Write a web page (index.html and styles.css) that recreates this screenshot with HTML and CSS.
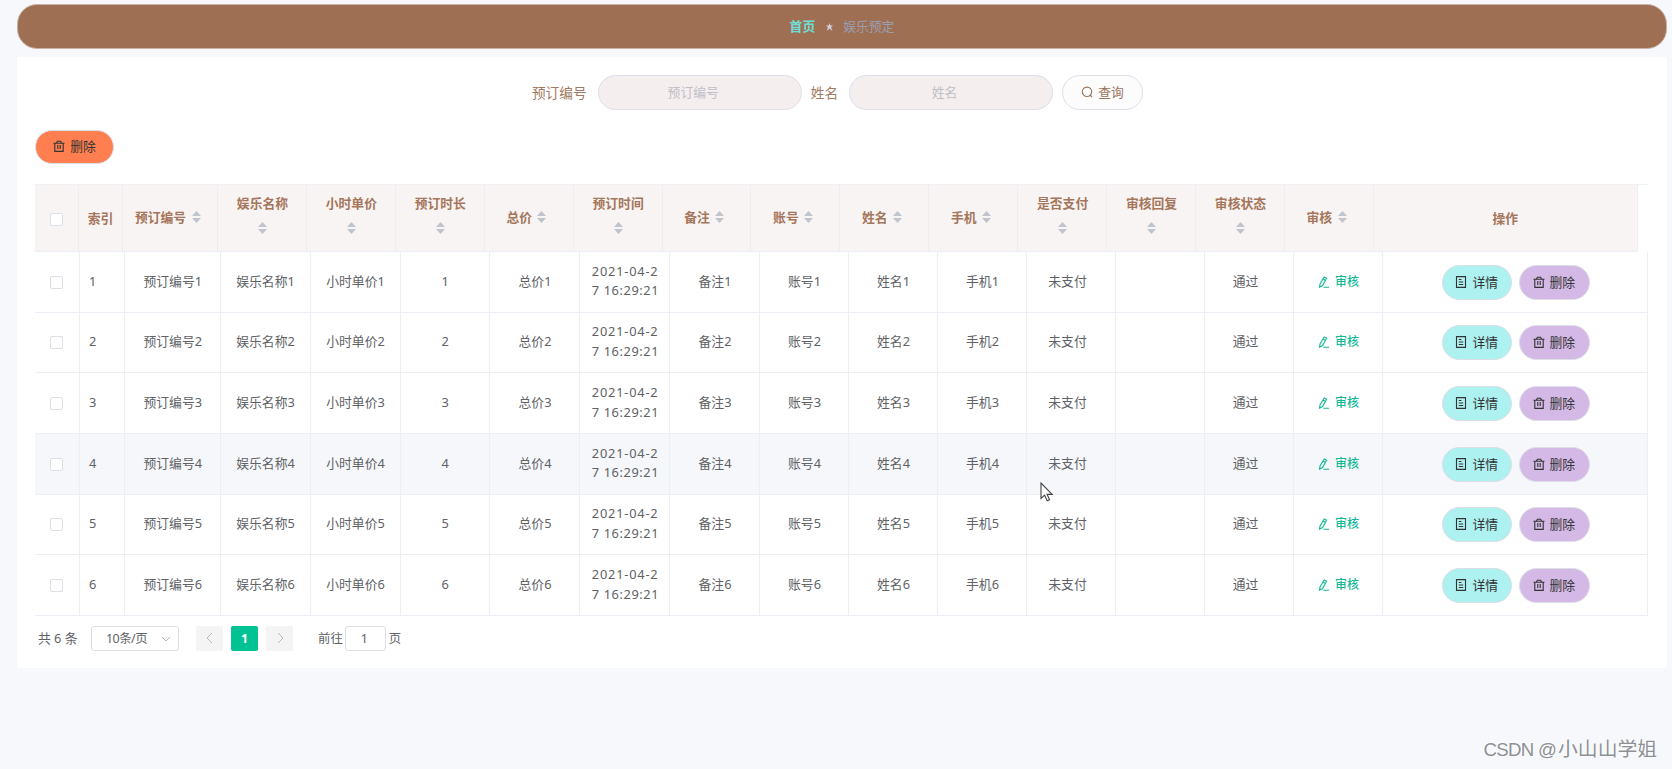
FILE: index.html
```html
<!DOCTYPE html>
<html lang="zh-CN">
<head>
<meta charset="utf-8">
<title>娱乐预定</title>
<link rel="stylesheet" href="styles.css">
</head>
<body>
<svg class="sprite" width="0" height="0">
  <symbol id="i-trash" viewBox="0 0 12 12"><path d="M.5 3.2h11M3.4 3l1-1.8h3.2l1 1.8M1.8 3v8.4h8.4V3M4.8 5v4M7.2 5v4"/></symbol>
  <symbol id="i-doc" viewBox="0 0 12 12"><path d="M1.5.6h9v10.8h-9zM3.8 3.5h2.6M3.8 6h4.4M3.8 8.5h4.4"/></symbol>
  <symbol id="i-edit" viewBox="0 0 12 12"><path d="M6.2.9l2.4 1.4-4 7.2-3 1.6.4-3.2zM5 3l2.4 1.5M5.4 11.2h5.6"/></symbol>
  <symbol id="i-search" viewBox="0 0 12 12"><circle cx="6" cy="5.8" r="4.7"/><path d="M9 9l2 2"/></symbol>
</svg>
<main class="page">
  <nav class="crumbs">
    <span class="crumb-home">首页</span><span class="crumb-sep"><svg viewBox="0 0 7 8"><path d="M3.5 0l.8 2.6H7L5 4.3 6.4 8 3.5 5.6.6 8 2 4.3 0 2.6h2.7z"/></svg></span><span class="crumb-here">娱乐预定</span>
  </nav>
  <section class="card">
    <form class="search">
      <label class="label">预订编号</label>
      <div class="field">预订编号</div>
      <label class="label label-name">姓名</label>
      <div class="field">姓名</div>
      <button type="button" class="btn btn-search"><svg class="icon"><use href="#i-search"/></svg>查询</button>
    </form>
    <div class="actions">
      <button type="button" class="btn btn-batch"><svg class="icon"><use href="#i-trash"/></svg>删除</button>
    </div>
    <div class="table">
      <div class="thead" id="thead"></div>
      <div class="tbody" id="tbody"></div>
    </div>
    <div class="pager">
      <span class="total">共 6 条</span>
      <span class="size">10条/页<svg class="chev" viewBox="0 0 10 10"><path d="M1 3l4 4 4-4"/></svg></span>
      <span class="pg prev"><svg class="chev" viewBox="0 0 10 10"><path d="M7 0L2 5l5 5"/></svg></span>
      <span class="pg current">1</span>
      <span class="pg next"><svg class="chev" viewBox="0 0 10 10"><path d="M3 0l5 5-5 5"/></svg></span>
      <span class="goto">前往</span><span class="jump">1</span><span>页</span>
    </div>
  </section>
</main>
<div class="watermark"><span class="latin">CSDN @</span>小山山学姐</div>
<svg class="cursor" viewBox="0 0 13 20"><path d="M1 1v15.5l3.6-3.3 2.6 5.6 2.4-1.1-2.5-5.3h5z"/></svg>
<script src="app.js"></script>
</body>
</html>
```
FILE: styles.css
```css
* { box-sizing: border-box; }
body {
  margin: 0;
  height: 769px;
  overflow: hidden;
  background: #f6f8fb;
  font-family: "Noto Sans", "Noto Sans CJK SC", sans-serif;
  font-size: 12.8px;
  line-height: 20px;
  color: #606266;
}
.sprite { position: absolute; }
.page { padding: 4px 5px 0 17px; }
.crumbs {
  height: 45px;
  border: 1px solid #c9b3a8;
  border-radius: 20px;
  background: #9f6f54;
  display: flex;
  align-items: center;
  justify-content: center;
  padding: 0 0 1px;
}
.crumb-home { color: #6fded8; font-weight: 700; }
.crumb-sep { width: 28px; display: flex; justify-content: center; padding-top: 2px; }
.crumb-sep svg { width: 7px; height: 8px; fill: #d0d3de; }
.crumb-here { color: #9a9fb2; }
.card {
  margin-top: 8px;
  height: 611px;
  background: #fff;
  padding: 18px 18px 0;
}
.search { display: flex; justify-content: center; align-items: center; height: 35px; padding-right: 9px; }
.label { font-size: 13.7px; color: #a07a62; margin-right: 11px; padding-top: 1px; }
.label-name { margin-left: 9px; }
.field {
  width: 204px;
  height: 35px;
  border: 1px solid #dcdfe9;
  border-radius: 17.5px;
  background: #f4eeee;
  color: #c0bfc7;
  text-align: center;
  line-height: 33px;
  padding-right: 13px;
}
.btn {
  font: inherit;
  height: 35px;
  border: 1px solid #dcdfe6;
  border-radius: 18px;
  padding: 0;
  display: inline-flex;
  align-items: center;
  justify-content: center;
  gap: 5px;
  color: #333;
}
.icon { width: 12px; height: 12px; fill: none; stroke: currentColor; stroke-width: 1.1; }
.btn-search { width: 81px; margin-left: 9px; background: #fcfcfd; color: #9a745c; padding-bottom: 1px; }
.actions { padding-top: 20px; height: 74px; }
.btn-batch { width: 79px; height: 34px; background: #ff7f50; padding-bottom: 2px; }
.thead, .row { display: grid; }
.thead {
  height: 68px;
  width: 1613px;
  border-top: 1px solid #f0f0f4;
  grid-template-columns: 44px 44px 95px repeat(13, 88.92px) 264px;
}
.th {
  background: #f8f4f3;
  border-right: 1px solid #ebeef5;
  border-bottom: 1px solid #ebeef5;
  color: #a5765b;
  font-weight: 600;
  display: flex;
  align-items: center;
  justify-content: center;
}
.th:first-child { padding-top: 2px; }
.th.sort { padding: 0 0 3px 1px; }
.th.stack { flex-direction: column; padding-bottom: 10px; gap: 9px; }
.caret { width: 20px; display: flex; justify-content: center; }
.caret svg { width: 9px; height: 12px; fill: #c0c4cc; }
.row {
  height: 60.67px;
  width: 1613px;
  grid-template-columns: 45px 45px 95.5px 90px 90px 89.5px repeat(3, 90px) repeat(7, 89px) 265px;
}
.row.hover { background: #f5f7fa; }
.td {
  border-right: 1px solid #ebeef5;
  border-bottom: 1px solid #ebeef5;
  display: flex;
  align-items: center;
  justify-content: center;
  padding: 0 0 2px 1px;
}
.td.index { justify-content: flex-start; padding-left: 9px; }
.td.time { line-height: 19.5px; letter-spacing: .6px; text-align: left; padding: 0 0 1px 2px; }
.day { letter-spacing: .8px; }
.td.status { padding-right: 8px; }
.td.pick { padding: 1px 3px 0 1px; }
.td.ops { gap: 7px; padding: 1px 0 0 1px; }
.check { width: 13px; height: 13px; border: 1px solid #dcdfe6; border-radius: 2px; background: #fff; }
.audit { color: #12b896; font-size: 12px; font-weight: 500; display: flex; align-items: center; gap: 5px; padding: 2px 0 0; }
.btn-row { width: 70.5px; padding-bottom: 1px; }
.detail { background: #adf1f1; gap: 5px; }
.remove { background: #d4b8e6; gap: 4px; }
.pager { display: flex; align-items: center; height: 25px; margin-top: 10px; padding-left: 3px; font-size: 12.4px; }
.total { width: 53px; font-size: 12.8px; }
.size {
  width: 88px;
  height: 25px;
  border: 1px solid #dcdfe6;
  border-radius: 3px;
  display: flex;
  align-items: center;
  justify-content: space-between;
  padding: 1px 7px 0 14px;
  margin-right: 17px;
  letter-spacing: -.5px;
}
.chev { width: 10px; height: 10px; fill: none; stroke: #b4b8c0; stroke-width: 1; }
.pg { width: 27px; height: 25px; border-radius: 2px; background: #f4f4f5; display: flex; align-items: center; justify-content: center; margin-right: 8px; }
.current { background: #00c292; color: #fff; font-weight: 700; padding-top: 1px; }
.goto { margin-left: 17px; margin-right: 2px; }
.goto, .jump + span { padding-top: 2px; }
.jump { width: 41px; height: 25px; border: 1px solid #dcdfe6; border-radius: 3px; text-align: center; line-height: 24px; margin-right: 3px; padding-right: 2px; }
.watermark {
  position: absolute;
  right: 15px;
  bottom: 5px;
  font-family: "Liberation Sans", "Noto Sans CJK SC", sans-serif;
  font-size: 19.8px;
  line-height: 28px;
  color: #8d9095;
  text-shadow: -1px -1px 0 #fff;
}
.latin { font-size: 18.6px; letter-spacing: -.7px; margin-right: 2px; }
.cursor { position: absolute; left: 1040px; top: 482px; width: 13px; height: 20px; fill: #fff; stroke: #444; stroke-width: 1.1; }
```
FILE: app.js
```js
const caret = '<span class="caret"><svg viewBox="0 0 9 12"><path d="M4.5 0L9 5H0zM4.5 12L0 7h9z"/></svg></span>';
const check = '<span class="check"></span>';
const icon = (name) => `<svg class="icon"><use href="#i-${name}"/></svg>`;
const fields = ['预订编号', '娱乐名称', '小时单价', '预订时长', '总价', '预订时间', '备注', '账号',
  '姓名', '手机', '是否支付', '审核回复', '审核状态', '审核'];

document.getElementById('thead').innerHTML =
  `<div class="th">${check}</div><div class="th">索引</div>` +
  fields.map((f, i) => `<div class="th sort${i && f.length > 2 ? ' stack' : ''}"><span>${f}</span>${caret}</div>`).join('') +
  '<div class="th">操作</div>';

const cell = (html, cls = '') => `<div class="td ${cls}">${html}</div>`;
let rows = '';
for (let n = 1; n <= 6; n++) {
  rows += `<div class="row${n === 4 ? ' hover' : ''}">` +
    cell(check, 'pick') + cell(n, 'index') +
    cell('预订编号' + n) + cell('娱乐名称' + n) + cell('小时单价' + n) + cell(n) + cell('总价' + n) +
    cell('<span><span class="day">2021-04-2</span><br>7 16:29:21</span>', 'time') +
    ['备注', '账号', '姓名', '手机'].map((t) => cell(t + n)).join('') +
    cell('未支付', 'status') + cell('') + cell('通过', 'status') +
    cell(`<span class="audit">${icon('edit')}审核</span>`) +
    cell(`<button class="btn btn-row detail">${icon('doc')}详情</button><button class="btn btn-row remove">${icon('trash')}删除</button>`, 'ops') +
    '</div>';
}
document.getElementById('tbody').innerHTML = rows;
```
